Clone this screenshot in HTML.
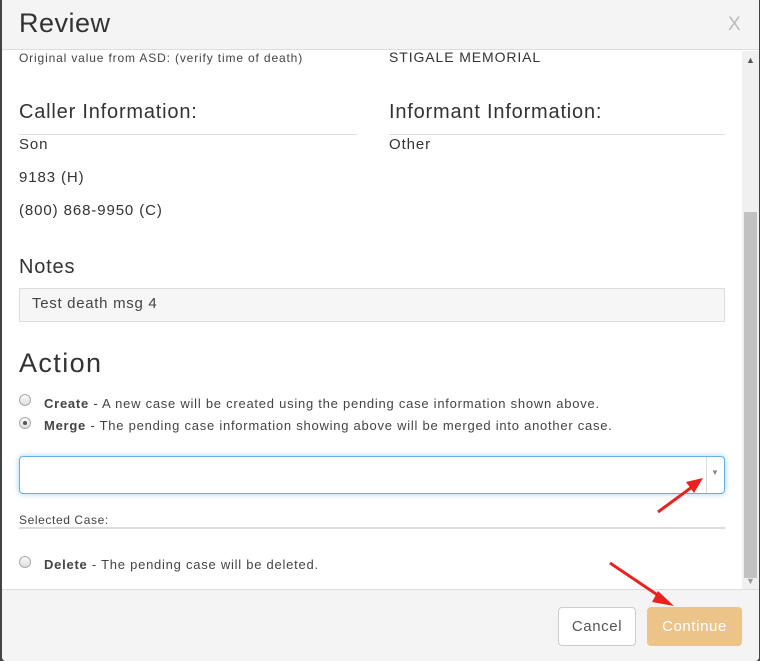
<!DOCTYPE html>
<html><head><meta charset="utf-8"><style>
*{box-sizing:border-box;margin:0;padding:0}
body{width:760px;height:661px;overflow:hidden;background:#444;font-family:"Liberation Sans",sans-serif;color:#333;position:relative}
.dlg{position:absolute;left:2px;top:0;width:757px;height:661px;background:#fff;border-radius:0 0 4px 4px;overflow:hidden}
.hdr{position:absolute;left:0;top:0;width:757px;height:50px;background:#f4f4f4;border-bottom:1px solid #ddd}
.hdr h1{position:absolute;left:17px;top:8px;font-weight:normal;font-size:27px;color:#333;letter-spacing:0.5px}
.hdr .x{position:absolute;left:726px;top:14px;font-size:19px;color:#bbb}
.t{position:absolute;white-space:nowrap}
.sb{position:absolute;left:740px;top:51px;width:17px;height:538px;background:#f0f0f0}
.thumb{position:absolute;left:2px;top:161px;width:13px;height:366px;background:#c1c1c1}
.ftr{position:absolute;left:0;top:589px;width:757px;height:72px;background:#f4f4f4;border-top:1px solid #ddd}
.rad{position:absolute;width:12px;height:12px;border-radius:50%;border:1px solid #aaa;background:linear-gradient(#fafafa,#ddd)}
.line{position:absolute;height:1px;background:#ddd}
.b{font-size:15px;letter-spacing:0.9px}
.h{font-size:20px;letter-spacing:0.8px}
.s{font-size:13px;letter-spacing:0.75px;color:#444}
</style></head><body>
<div class="dlg">
<div class="hdr"><h1>Review</h1><span class="x">X</span></div>
<div class="t" style="left:17px;top:51px;font-size:12px;color:#444;letter-spacing:0.85px">Original value from ASD: (verify time of death)</div>
<div class="t" style="left:387px;top:49px;font-size:14px;letter-spacing:0.9px">STIGALE MEMORIAL</div>
<div class="t h" style="left:17px;top:101px">Caller Information:</div>
<div class="t h" style="left:387px;top:101px">Informant Information:</div>
<div class="line" style="left:17px;top:134px;width:338px"></div>
<div class="line" style="left:387px;top:134px;width:336px"></div>
<div class="t b" style="left:17px;top:136px">Son</div>
<div class="t b" style="left:387px;top:136px">Other</div>
<div class="t b" style="left:17px;top:169px">9183 (H)</div>
<div class="t b" style="left:17px;top:202px">(800) 868-9950 (C)</div>
<div class="t h" style="left:17px;top:256px">Notes</div>
<div style="position:absolute;left:17px;top:288px;width:706px;height:34px;background:#f6f6f6;border:1px solid #ddd"></div>
<div class="t b" style="left:30px;top:295px;color:#444;letter-spacing:0.7px">Test death msg 4</div>
<div class="t" style="left:17px;top:348px;font-size:27px;letter-spacing:1.4px">Action</div>
<div class="rad" style="left:17px;top:394px"></div>
<div class="t s" style="left:42px;top:396px"><b>Create</b> - A new case will be created using the pending case information shown above.</div>
<div class="rad" style="left:17px;top:417px"><div style="position:absolute;left:3px;top:3px;width:4px;height:4px;border-radius:50%;background:#555"></div></div>
<div class="t s" style="left:42px;top:418px"><b>Merge</b> - The pending case information showing above will be merged into another case.</div>
<div style="position:absolute;left:17px;top:456px;width:706px;height:38px;border:1px solid #66afe9;border-radius:4px;box-shadow:0 0 6px rgba(102,175,233,.6)"></div>
<div style="position:absolute;left:704px;top:457px;width:1px;height:36px;background:#ddd"></div>
<div class="t" style="left:709px;top:468px;font-size:8px;color:#888">▼</div>
<div class="t" style="left:17px;top:513px;font-size:12px;color:#444;letter-spacing:0.6px">Selected Case:</div>
<div class="line" style="left:17px;top:527px;width:706px;height:2px"></div>
<div class="rad" style="left:17px;top:556px"></div>
<div class="t s" style="left:42px;top:557px"><b>Delete</b> - The pending case will be deleted.</div>
<div class="sb"><div style="position:absolute;left:4px;top:4px;font-size:9px;color:#555">▲</div><div class="thumb"></div><div style="position:absolute;left:4px;top:525px;font-size:9px;color:#999">▼</div></div>
<div class="ftr">
<div style="position:absolute;left:556px;top:17px;width:78px;height:39px;border:1px solid #ccc;border-radius:4px;background:#fff;text-align:center;line-height:37px;font-size:15px;color:#555;letter-spacing:0.6px">Cancel</div>
<div style="position:absolute;left:645px;top:17px;width:95px;height:39px;border-radius:4px;background:#ecc48a;text-align:center;line-height:39px;font-size:15px;color:#fff;letter-spacing:0.6px">Continue</div>
</div>
<svg style="position:absolute;left:0;top:0" width="757" height="661">
<g stroke="#e8231f" stroke-width="3" fill="#e8231f">
<line x1="656" y1="512" x2="690" y2="487"/><polygon points="701,478 684,482 692,493" stroke="none"/>
<line x1="608" y1="563" x2="660" y2="598"/><polygon points="672,606 656,591 650,602" stroke="none"/>
</g></svg>
</div>
</body></html>
